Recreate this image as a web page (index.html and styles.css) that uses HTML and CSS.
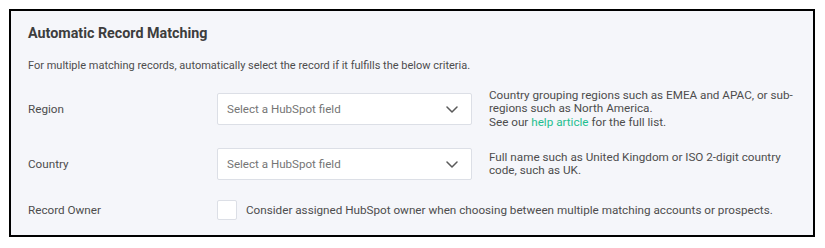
FILE: index.html
```html
<!DOCTYPE html>
<html>
<head>
<meta charset="utf-8">
<link rel="stylesheet" href="styles.css">
</head>
<body>
<section class="panel">
  <h2 class="title">Automatic Record Matching</h2>
  <p class="desc">For multiple matching records, automatically select the record if it fulfills the below criteria.</p>

  <div class="row row-region">
    <div class="label">Region</div>
    <div class="select">
      <span class="placeholder">Select a HubSpot field</span>
      <svg class="chevron" width="12" height="7" viewBox="0 0 12 7"><path d="M1 1l5 5 5-5" fill="none" stroke="#5a5a5a" stroke-width="1.5" stroke-linecap="round" stroke-linejoin="round"/></svg>
    </div>
    <div class="help">Country grouping regions such as EMEA and APAC, or sub-<br>regions such as North America.<br>See our <a class="link" href="#">help article</a> for the full list.</div>
  </div>

  <div class="row row-country">
    <div class="label">Country</div>
    <div class="select">
      <span class="placeholder">Select a HubSpot field</span>
      <svg class="chevron" width="12" height="7" viewBox="0 0 12 7"><path d="M1 1l5 5 5-5" fill="none" stroke="#5a5a5a" stroke-width="1.5" stroke-linecap="round" stroke-linejoin="round"/></svg>
    </div>
    <div class="help">Full name such as United Kingdom or ISO 2-digit country<br>code, such as UK.</div>
  </div>

  <div class="row row-owner">
    <div class="label">Record Owner</div>
    <label class="check">
      <span class="box"></span>
      <span class="check-text">Consider assigned HubSpot owner when choosing between multiple matching accounts or prospects.</span>
    </label>
  </div>
</section>
</body>
</html>
```

FILE: styles.css
```css
html, body {
  margin: 0;
  padding: 0;
  background: #ffffff;
}
body {
  padding: 9px 0 0 9px;
  font-family: Roboto, "Liberation Sans", Arial, sans-serif;
  color: #4d4d4d;
}
.panel {
  box-sizing: border-box;
  width: 806px;
  height: 228px;
  border: 2px solid #000;
  background: #f5f6fa;
  padding: 13px 18px 15px 17px;
  display: flex;
  flex-direction: column;
}
.title {
  margin: 0;
  font-size: 14.3px;
  line-height: 18px;
  font-weight: 700;
  color: #3d3d3d;
}
.desc {
  margin: 16px 0 0;
  font-size: 11px;
  line-height: 16px;
  color: #4d4d4d;
}
.row {
  display: flex;
  align-items: center;
}
.row-region {
  margin-top: 14px;
  height: 42px;
}
.row-country {
  margin-top: 18px;
  height: 32px;
}
.row-owner {
  margin-top: 20px;
  height: 20px;
}
.label {
  width: 189px;
  flex: none;
  font-size: 11.7px;
  line-height: 16px;
  color: #4d4d4d;
}
.select {
  box-sizing: border-box;
  width: 255px;
  height: 32px;
  flex: none;
  background: #fff;
  border: 1px solid #dcdfe6;
  border-radius: 2px;
  display: flex;
  align-items: center;
  justify-content: space-between;
  padding: 0 13px 0 9px;
}
.placeholder {
  font-size: 11.6px;
  color: #757575;
}
.chevron {
  display: block;
}
.help {
  margin-left: 17px;
  font-size: 11.7px;
  line-height: 13.5px;
  color: #4d4d4d;
  white-space: nowrap;
}
.link {
  color: #1fbf8f;
  text-decoration: none;
}
.check {
  display: flex;
  align-items: center;
}
.box {
  box-sizing: border-box;
  width: 20px;
  height: 20px;
  background: #fff;
  border: 1px solid #dcdfe6;
  border-radius: 2px;
  flex: none;
}
.check-text {
  margin-left: 9px;
  font-size: 11.7px;
  line-height: 16px;
  color: #4d4d4d;
}
```
